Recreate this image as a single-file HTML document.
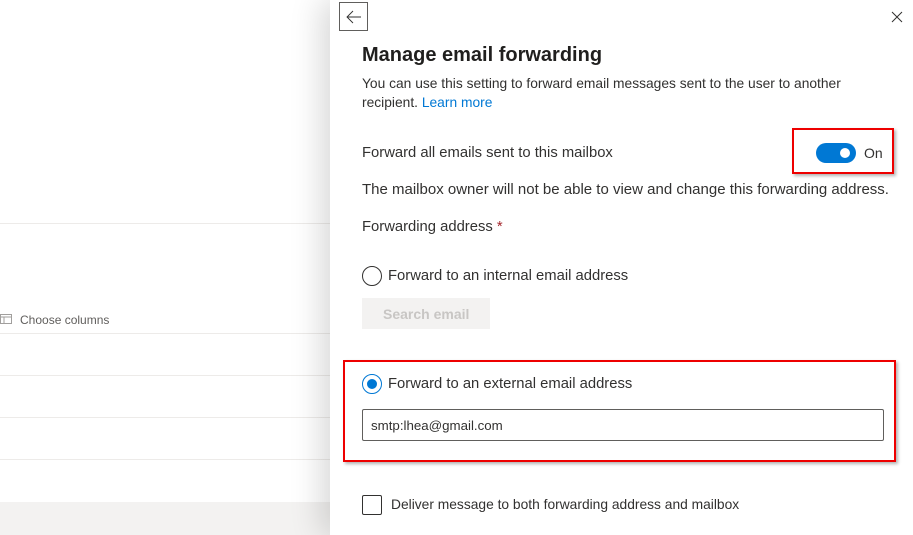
<!DOCTYPE html>
<html><head><meta charset="utf-8"><style>
*{margin:0;padding:0;box-sizing:border-box}
body{width:913px;height:535px;overflow:hidden;background:#fff;font-family:"Liberation Sans",sans-serif;position:relative;color:#323130}
.a{position:absolute}
.ln{position:absolute;left:0;width:330px;height:1px;background:#edebe9}
.panel{position:absolute;left:330px;top:0;width:583px;height:535px;background:#fff;box-shadow:-8px 0 30px rgba(0,0,0,.16)}
.t{position:absolute;font-size:14px;white-space:nowrap}
.red{position:absolute;border:2px solid #e00;box-shadow:2px 2px 3px rgba(0,0,0,.3)}
</style></head><body>
<div class="ln" style="top:223px"></div>
<div class="ln" style="top:333px"></div>
<div class="ln" style="top:375px"></div>
<div class="ln" style="top:417px"></div>
<div class="ln" style="top:459px"></div>
<div class="a" style="left:0;top:502px;width:330px;height:33px;background:#f3f2f1"></div>
<svg class="a" style="left:0;top:313px" width="13" height="13" viewBox="0 0 13 13"><rect x="0.5" y="1.5" width="11" height="9" fill="none" stroke="#a19f9d"/><line x1="0" y1="4" x2="12" y2="4" stroke="#a19f9d"/><line x1="4" y1="4" x2="4" y2="10" stroke="#a19f9d"/></svg>
<div class="t" style="left:20px;top:313px;font-size:12px;color:#605e5c">Choose columns</div>

<div class="panel">
<div class="a" style="left:9px;top:2px;width:29px;height:29px;border:1px solid #605e5c"></div>
<svg class="a" style="left:15px;top:8px" width="18" height="18" viewBox="0 0 18 18"><path d="M16 9H2M8 3L2 9l6 6" fill="none" stroke="#323130" stroke-width="0.9"/></svg>
<svg class="a" style="left:561px;top:11px" width="12" height="12" viewBox="0 0 12 12"><path d="M1 1l10 10M11 1L1 11" stroke="#323130" stroke-width="1"/></svg>
<div class="t" style="left:32px;top:44px;font-size:20px;font-weight:bold;color:#201f1e">Manage email forwarding</div>
<div class="t" style="left:32px;top:74px;font-size:13.8px;line-height:19px;color:#323130;white-space:normal;width:500px">You can use this setting to forward email messages sent to the user to another recipient. <span style="color:#0078d4">Learn more</span></div>
<div class="t" style="left:32px;top:145px;font-size:14.8px">Forward all emails sent to this mailbox</div>
<div class="a" style="left:486px;top:143px;width:40px;height:20px;border-radius:10px;background:#0078d4"></div>
<div class="a" style="left:510px;top:148px;width:10px;height:10px;border-radius:5px;background:#fff"></div>
<div class="t" style="left:534px;top:145px;font-size:14px">On</div>
<div class="red" style="left:462px;top:128px;width:102px;height:46px"></div>
<div class="t" style="left:32px;top:181px;font-size:15px">The mailbox owner will not be able to view and change this forwarding address.</div>
<div class="t" style="left:32px;top:219px;font-size:14.8px">Forwarding address <span style="color:#a4262c">*</span></div>
<div class="a" style="left:32px;top:266px;width:20px;height:20px;border-radius:50%;border:1px solid #323130"></div>
<div class="t" style="left:58px;top:268px;font-size:14.8px">Forward to an internal email address</div>
<div class="a" style="left:32px;top:298px;width:128px;height:31px;background:#f3f2f1"></div>
<div class="t" style="left:53px;top:306px;font-size:14px;font-weight:bold;color:#c8c6c4">Search email</div>
<div class="red" style="top:360px;width:553px;height:102px;left:13px"></div>
<div class="a" style="left:32px;top:374px;width:20px;height:20px;border-radius:50%;border:1px solid #0078d4"></div>
<div class="a" style="left:37px;top:379px;width:10px;height:10px;border-radius:50%;background:#0078d4"></div>
<div class="t" style="left:58px;top:376px;font-size:14.8px">Forward to an external email address</div>
<div class="a" style="left:32px;top:409px;width:522px;height:32px;border:1px solid #605e5c;border-radius:2px"></div>
<div class="t" style="left:41px;top:418px;font-size:13.3px">smtp:lhea@gmail.com</div>
<div class="a" style="left:32px;top:495px;width:20px;height:20px;border:1px solid #323130;border-radius:2px"></div>
<div class="t" style="left:61px;top:497px;font-size:13.8px">Deliver message to both forwarding address and mailbox</div>
</div>
</body></html>
